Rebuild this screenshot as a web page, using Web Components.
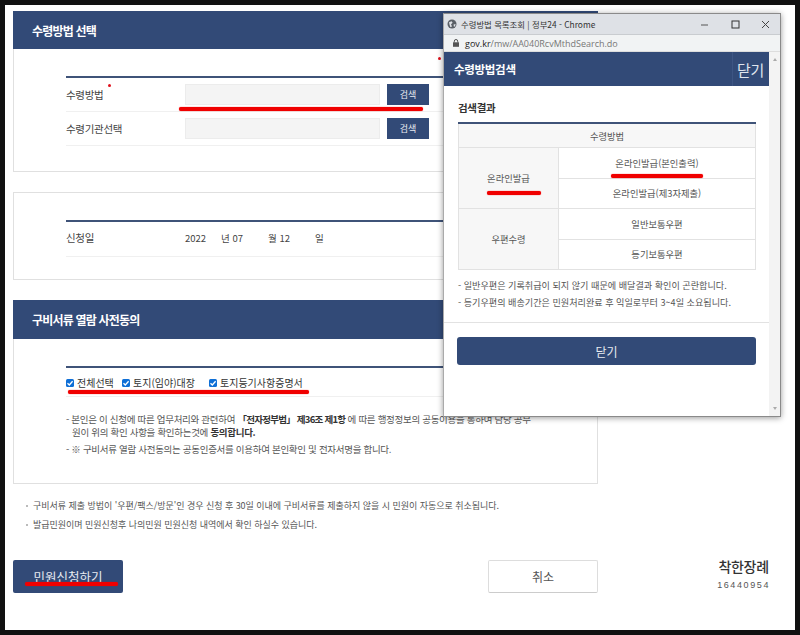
<!DOCTYPE html>
<html lang="ko">
<head>
<meta charset="utf-8">
<title>수령방법 선택</title>
<style>
  html, body { margin: 0; padding: 0; background: #111; }
  body { width: 800px; height: 635px; overflow: hidden; font-family: "Noto Sans CJK KR", "Noto Sans", sans-serif; color: #333; }
</style>
</head>
<body>
<app-page>
  <form-section title="수령방법 선택" height="123" pad="27" dot>
    <form-row label="수령방법" required><search-field></search-field></form-row>
    <form-row label="수령기관선택"><search-field></search-field></form-row>
  </form-section>

  <form-section height="88" pad="27" style="margin-top:20px">
    <form-row label="신청일" height="35" style="padding-bottom:3px"><date-text></date-text></form-row>
  </form-section>

  <form-section title="구비서류 열람 사전동의" bar="39" height="145" pad="27" style="margin-top:20px">
    <consent-box></consent-box>
  </form-section>

  <page-notes></page-notes>
  <page-actions></page-actions>

  <red-mark style="left:174px;top:102px;width:244px"></red-mark>
  <red-mark style="left:63px;top:385px;width:241px"></red-mark>
  <red-mark style="left:20px;top:577px;width:93px"></red-mark>

  <popup-window></popup-window>

  <red-mark style="left:606px;top:169px;width:92px"></red-mark>
  <red-mark style="left:482px;top:186px;width:54px"></red-mark>
</app-page>

<script>
class AppPage extends HTMLElement {
  constructor() {
    super();
    this.attachShadow({mode: 'open'}).innerHTML = `
      <style>
        :host {
          display: block;
          position: absolute;
          left: 5px;
          top: 5px;
          width: 790px;
          height: 625px;
          box-sizing: border-box;
          padding: 6px 0 0 8px;
          background: #fff;
        }
      </style>
      <slot></slot>
    `;
  }
}

class FormSection extends HTMLElement {
  constructor() {
    super();
    const title = this.getAttribute('title');
    const height = this.getAttribute('height');
    const pad = this.getAttribute('pad');
    const bar = this.getAttribute('bar') || 38;
    this.attachShadow({mode: 'open'}).innerHTML = `
      <style>
        :host { display: block; width: 585px; }
        .bar {
          height: ${bar}px;
          display: flex;
          align-items: center;
          padding-left: 19px;
          background: #324a77;
          color: #fff;
          font-size: 12px;
          font-weight: 700;
          letter-spacing: -0.8px;
        }
        .panel {
          position: relative;
          box-sizing: border-box;
          height: ${height}px;
          border: 1px solid #e0e0e0;
          padding: ${pad}px 0 0 52px;
        }
        .bar + .panel { border-top: 0; }
        .rows { border-top: 2px solid #3f5378; }
        .dot { position: absolute; left: 424px; top: 8px; width: 3px; height: 3px; border-radius: 50%; background: #e0101c; }
      </style>
      ${title ? `<div class="bar">${title}</div>` : ''}
      <div class="panel">
        ${this.hasAttribute('dot') ? '<span class="dot"></span>' : ''}
        <div class="rows"><slot></slot></div>
      </div>
    `;
  }
}

class FormRow extends HTMLElement {
  constructor() {
    super();
    const h = this.getAttribute('height') || 34;
    this.attachShadow({mode: 'open'}).innerHTML = `
      <style>
        :host {
          display: flex;
          align-items: center;
          height: ${h}px;
          box-sizing: border-box;
          border-bottom: 1px solid #f0f0f0;
          font-size: 10.5px;
          color: #444;
        }
        .label { position: relative; width: 119px; letter-spacing: -0.3px; }
        .req { position: absolute; left: 42px; top: -3px; width: 3px; height: 3px; border-radius: 50%; background: #e0101c; }
      </style>
      <div class="label">${this.getAttribute('label')}${this.hasAttribute('required') ? '<span class="req"></span>' : ''}</div>
      <slot></slot>
    `;
  }
}

class SearchField extends HTMLElement {
  constructor() {
    super();
    this.attachShadow({mode: 'open'}).innerHTML = `
      <style>
        :host { display: flex; gap: 7px; }
        .input { width: 195px; height: 21px; box-sizing: border-box; background: #f4f4f4; border: 1px solid #ececec; }
        .btn {
          width: 42px; height: 21px;
          display: flex; align-items: center; justify-content: center;
          background: #324a77; color: #e8ebf1; font-size: 9px;
        }
      </style>
      <div class="input"></div><div class="btn">검색</div>
    `;
  }
}

class DateText extends HTMLElement {
  constructor() {
    super();
    this.attachShadow({mode: 'open'}).innerHTML = `
      <style>
        :host { display: flex; font-size: 9.5px; color: #444; }
        span { display: block; }
      </style>
      <span style="width:36px">2022</span>
      <span style="width:47px">년 07</span>
      <span style="width:47px">월 12</span>
      <span>일</span>
    `;
  }
}

class ConsentBox extends HTMLElement {
  constructor() {
    super();
    this.attachShadow({mode: 'open'}).innerHTML = `
      <style>
        :host { display: block; }
        .checks {
          display: flex;
          align-items: center;
          height: 29px;
          box-sizing: border-box;
          border-bottom: 1px solid #f0f0f0;
          font-size: 10px;
          color: #333;
        }
        label { display: flex; align-items: center; gap: 3px; }
        .box {
          width: 8px; height: 8px; border-radius: 1.5px; background: #0f6fd6;
          display: flex; align-items: center; justify-content: center;
          margin-top: 2px;
        }
        ul { list-style: none; margin: 0; padding: 16px 0 0; font-size: 9.5px; line-height: 13px; color: #555; letter-spacing: -0.3px; }
        li { padding-left: 6px; text-indent: -6px; margin-bottom: 4px; white-space: nowrap; }
        b { color: #333; }
        b.law { letter-spacing: -0.75px; }
      </style>
      <div class="checks">
        <label style="width:56px">${this.check()}전체선택</label>
        <label style="width:87px">${this.check()}토지(임야)대장</label>
        <label>${this.check()}토지등기사항증명서</label>
      </div>
      <ul>
        <li>- 본인은 이 신청에 따른 업무처리와 관련하여 <b class="law">「전자정부법」 제36조 제1항</b> 에 따른 행정정보의 공동이용을 통하여 담당 공무<br>원이 위의 확인 사항을 확인하는것에 <b>동의합니다.</b></li>
        <li>- ※ 구비서류 열람 사전동의는 공동인증서를 이용하여 본인확인 및 전자서명을 합니다.</li>
      </ul>
    `;
  }

  check() {
    return `<span class="box"><svg width="8" height="8" viewBox="0 0 8 8"><path d="M1.5 4.2 3.3 6 6.6 2.2" fill="none" stroke="#fff" stroke-width="1.3"/></svg></span>`;
  }
}

class PageNotes extends HTMLElement {
  constructor() {
    super();
    this.attachShadow({mode: 'open'}).innerHTML = `
      <style>
        :host { display: block; margin-top: 15px; font-size: 9px; line-height: 14px; color: #555; letter-spacing: -0.03px; }
        p { margin: 0 0 5px; padding-left: 20px; position: relative; white-space: nowrap; }
        p::before { content: ""; position: absolute; left: 13px; top: 6px; width: 2px; height: 2px; background: #bbb; }
      </style>
      <p>구비서류 제출 방법이 '우편/팩스/방문'인 경우 신청 후 30일 이내에 구비서류를 제출하지 않을 시 민원이 자동으로 취소됩니다.</p>
      <p>발급민원이며 민원신청후 나의민원 민원신청 내역에서 확인 하실수 있습니다.</p>
    `;
  }
}

class PageActions extends HTMLElement {
  constructor() {
    super();
    this.attachShadow({mode: 'open'}).innerHTML = `
      <style>
        :host { display: flex; align-items: flex-start; margin-top: 28px; width: 757px; }
        .btn {
          width: 110px; height: 33px; box-sizing: border-box;
          display: flex; align-items: center; justify-content: center;
          border-radius: 2px; font-size: 12.5px;
        }
        .primary { background: #324a77; color: #e8ebf1; }
        .cancel { margin-left: 365px; background: #fff; border: 1px solid #ddd; border-bottom-color: #ccc; color: #555; font-size: 12px; }
        .brand { margin-left: auto; text-align: center; margin-top: -4px; }
        .name { font-size: 14px; font-weight: 500; color: #333; line-height: 20px; letter-spacing: -0.3px; }
        .num { font-size: 9px; color: #555; letter-spacing: 1.6px; line-height: 18px; font-family: "Liberation Sans", sans-serif; }
      </style>
      <div class="btn primary">민원신청하기</div>
      <div class="btn cancel">취소</div>
      <div class="brand"><div class="name">착한장례</div><div class="num">16440954</div></div>
    `;
  }
}

class PopupWindow extends HTMLElement {
  constructor() {
    super();
    this.attachShadow({mode: 'open'}).innerHTML = `
      <style>
        :host {
          position: absolute;
          left: 438px;
          top: 8px;
          width: 338px;
          height: 404px;
          box-sizing: border-box;
          background: #fff;
          border: 1px solid #8a8a8a;
          border-left-color: #aaa;
          box-shadow: 0 1px 6px rgba(0,0,0,.4);
          display: flex;
          flex-direction: column;
          overflow: hidden;
        }
        .chrome { height: 20px; display: flex; align-items: center; background: #dee1e6; font-size: 8.4px; color: #333; padding-left: 3px; flex: none; }
        .chrome .title { margin-left: 4px; flex: 1; white-space: nowrap; }
        .chrome svg { flex: none; }
        .addr { height: 18px; flex: none; display: flex; align-items: center; gap: 6px; padding-left: 9px; background: #f1f3f4; border-top: 1px solid #c9ccd0; border-bottom: 1px solid #ddd; box-sizing: border-box; font-family: "Open Sans", sans-serif; font-size: 9px; color: #777; }
        .addr b { font-weight: 400; color: #222; }
        .view { flex: 1; display: flex; min-height: 0; }
        .content { width: 325px; box-sizing: border-box; display: flex; flex-direction: column; }
        .head { height: 34px; flex: none; display: flex; align-items: center; background: #324a77; color: #fff; font-size: 11.5px; font-weight: 700; padding-left: 10px; letter-spacing: -0.3px; }
        .head span:first-child { flex: 1; }
        .head .x { height: 100%; display: flex; align-items: center; padding: 0 5px 0 4px; border-left: 1px solid #3d5583; font-size: 15px; font-weight: 400; color: #dfe4ed; }
        .body { padding: 14px 13px 0 14px; border-bottom: 1px solid #e2e2e2; height: 237px; box-sizing: border-box; flex: none; }
        h3 { margin: 0; font-size: 10.5px; line-height: 16px; font-weight: 700; color: #333; letter-spacing: -0.3px; }
        .foot { padding: 14px 13px 0; }
        .close { height: 28px; display: flex; align-items: center; justify-content: center; background: #324a77; border-radius: 3px; color: #e8ebf1; font-size: 12px; }
        .scroll { flex: 1; background: #f3f3f3; display: flex; flex-direction: column; justify-content: space-between; align-items: center; padding: 4px 0; box-sizing: border-box; }
        .scroll i { width: 0; height: 0; border: 2px solid transparent; }
        .scroll i:first-child { border-bottom: 3px solid #aaa; }
        .scroll i:last-child { border-top: 3px solid #aaa; }
        table { border-collapse: collapse; margin-top: 6px; width: 298px; table-layout: fixed; font-size: 9.3px; color: #555; text-align: center; border-top: 2px solid #3f5378; }
        td, th { border: 1px solid #e2e2e2; padding: 0; font-weight: 400; height: 29.5px; }
        tr:first-child th { border-top: 0; height: 23px; background: #f7f7f7; }
        th { background: #f7f7f7; }
        ul { list-style: none; margin: 7px 0 0; padding: 0; font-size: 9.1px; line-height: 17px; color: #555; white-space: nowrap; }
      </style>
      <div class="chrome">
        <svg width="10" height="10" viewBox="0 0 10 10"><circle cx="5" cy="5" r="4.5" fill="#5a5f66"/><path d="M2 3.2 4.6 2.2 5.6 3.8 4 5.2 5 7.6 3.4 8.2 2.6 6ZM6.6 5.4 8.6 5 8 7.4 6.8 7.6Z" fill="#dee1e6"/></svg>
        <span class="title">수령방법 목록조회 | 정부24 - Chrome</span>
        <svg width="9" height="11" viewBox="0 0 9 11" style="margin-right:22px"><path d="M1 6H8" stroke="#555" stroke-width="1"/></svg>
        <svg width="9" height="9" viewBox="0 0 9 9" style="margin-right:21px"><rect x="1" y="1" width="7" height="7" fill="none" stroke="#333"/></svg>
        <svg width="9" height="9" viewBox="0 0 9 9" style="margin-right:10px"><path d="M1 1 8 8M8 1 1 8" stroke="#444" stroke-width="1"/></svg>
      </div>
      <div class="addr">
        <svg width="6" height="8" viewBox="0 0 6 8"><path d="M1.3 3.5V2.2a1.7 1.7 0 0 1 3.4 0v1.3" fill="none" stroke="#555"/><rect y="3.3" width="6" height="4.5" fill="#555"/></svg>
        <span><b>gov.kr</b>/mw/AA040RcvMthdSearch.do</span>
      </div>
      <div class="view">
        <div class="content">
          <div class="head"><span>수령방법검색</span><span class="x">닫기</span></div>
          <div class="body">
            <h3>검색결과</h3>
            <table>
              <colgroup><col style="width:100px"><col></colgroup>
              <tr><th colspan="2">수령방법</th></tr>
              <tr><th rowspan="2">온라인발급</th><td>온라인발급(본인출력)</td></tr>
              <tr><td>온라인발급(제3자제출)</td></tr>
              <tr><th rowspan="2">우편수령</th><td>일반보통우편</td></tr>
              <tr><td>등기보통우편</td></tr>
            </table>
            <ul>
              <li>- 일반우편은 기록취급이 되지 않기 때문에 배달결과 확인이 곤란합니다.</li>
              <li>- 등기우편의 배송기간은 민원처리완료 후 익일로부터 3~4일 소요됩니다.</li>
            </ul>
          </div>
          <div class="foot"><div class="close">닫기</div></div>
        </div>
        <div class="scroll"><i></i><i></i></div>
      </div>
    `;
  }
}

class RedMark extends HTMLElement {
  constructor() {
    super();
    this.attachShadow({mode: 'open'}).innerHTML = `
      <style>
        :host {
          display: block;
          position: absolute;
          height: 4px;
          border-radius: 2px;
          background: #f00000;
          box-shadow: 0 0 1px #f00000;
        }
      </style>
    `;
  }
}

customElements.define('app-page', AppPage);
customElements.define('form-section', FormSection);
customElements.define('form-row', FormRow);
customElements.define('search-field', SearchField);
customElements.define('date-text', DateText);
customElements.define('consent-box', ConsentBox);
customElements.define('page-notes', PageNotes);
customElements.define('page-actions', PageActions);
customElements.define('popup-window', PopupWindow);
customElements.define('red-mark', RedMark);
</script>
</body>
</html>
